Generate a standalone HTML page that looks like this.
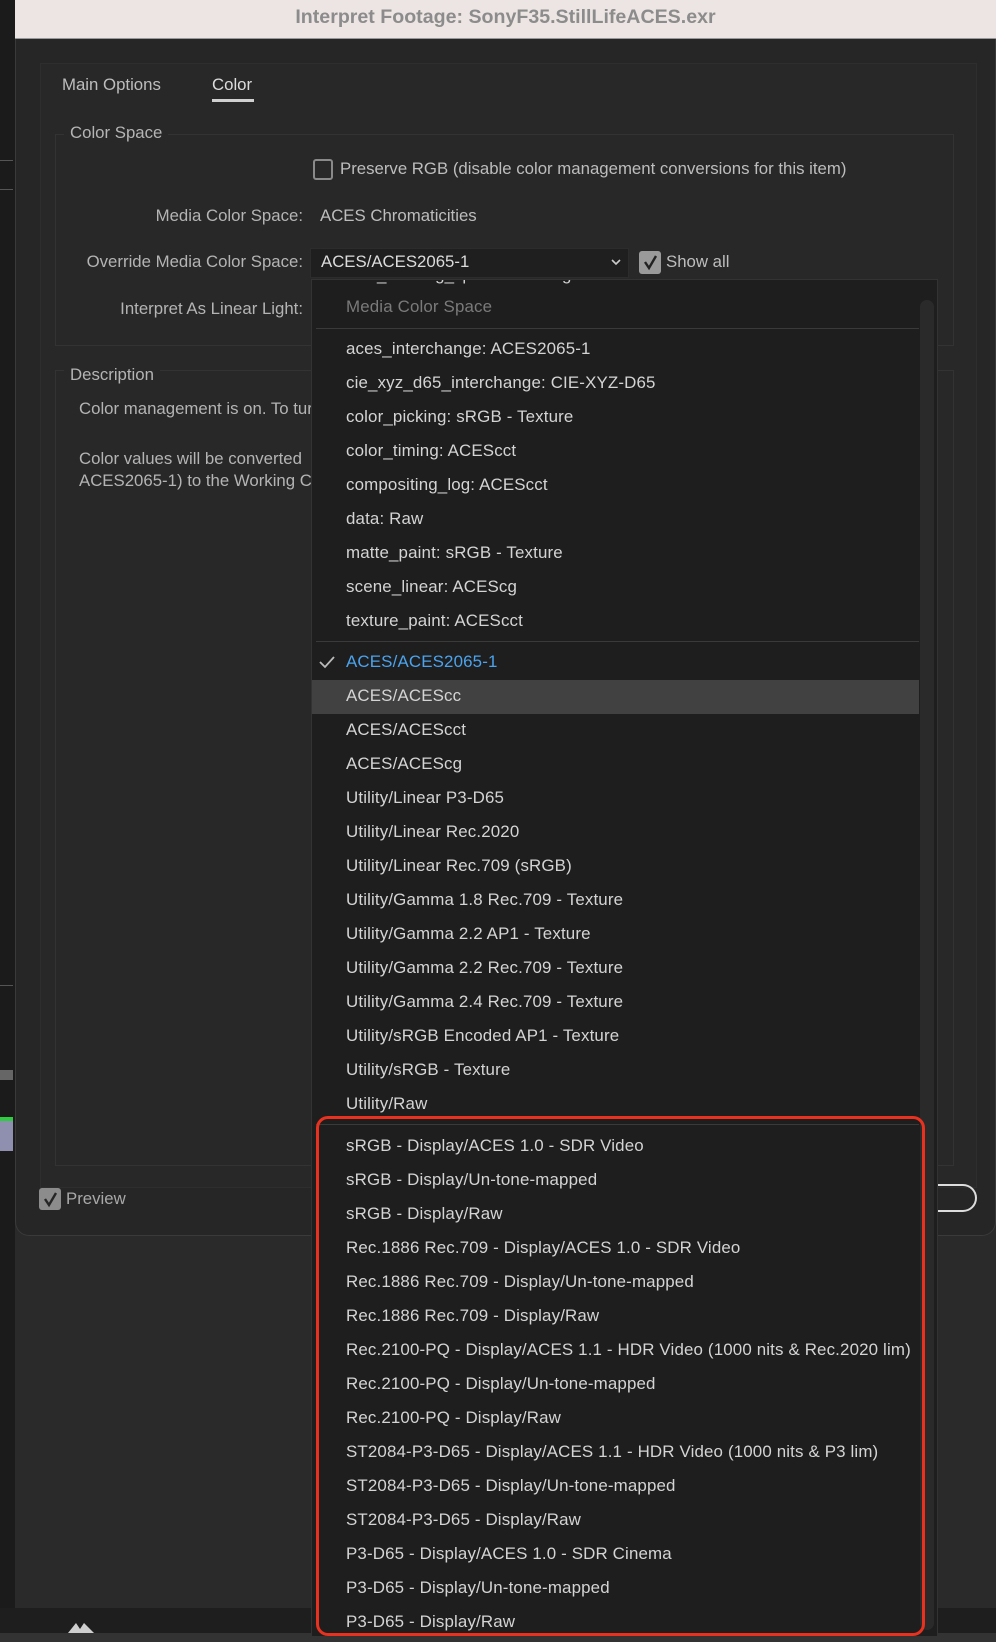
<!DOCTYPE html>
<html><head><meta charset="utf-8"><style>
*{margin:0;padding:0;box-sizing:border-box}
body{width:996px;height:1642px;background:#2a2a2a;position:relative;overflow:hidden;font-family:"Liberation Sans",sans-serif;font-size:16.8px;color:#c8c8c8}
.a{position:absolute;white-space:nowrap}
.it{position:absolute;left:346px;height:34px;line-height:34px;color:#d4d4d4;white-space:nowrap;font-size:16.9px;letter-spacing:0.15px}
.lbl{position:absolute;text-align:right;width:300px;color:#b4b4b4;white-space:nowrap;line-height:20px}
</style></head><body>
<div class="a" style="left:0;top:0;width:15px;height:1642px;background:#1b1b1b"></div>
<div class="a" style="left:0;top:160px;width:13px;height:30px;border-top:1px solid #555;border-bottom:1px solid #555"></div>
<div class="a" style="left:0;top:985px;width:13px;height:1px;background:#555"></div>
<div class="a" style="left:0;top:1070px;width:13px;height:10px;background:#666"></div>
<div class="a" style="left:0;top:1117px;width:13px;height:4px;background:#2ecc40"></div>
<div class="a" style="left:0;top:1121px;width:13px;height:30px;background:#8f8fb0"></div>
<div class="a" style="left:0;top:1608px;width:996px;height:34px;background:#1e1e1e"></div>
<div class="a" style="left:0;top:1633px;width:996px;height:9px;background:#333"></div>
<svg class="a" style="left:66px;top:1620px" width="30" height="14"><path d="M2 13 L10 3 L14 9 L18 3 L28 13 Z" fill="#cfcfcf"/></svg>
<div class="a" style="left:15px;top:0;width:981px;height:1236px;background:#262626;border-radius:0 0 14px 14px;border:1px solid #3a3a3a;border-top:none"></div>
<div class="a" style="left:15px;top:0;width:981px;height:39px;background:#ece5e3;border-bottom:1px solid #999"></div>
<div class="a" style="left:15px;top:0;width:981px;height:39px;line-height:34px;text-align:center;color:#8c8c8c;font-weight:bold;font-size:19.6px">Interpret Footage: SonyF35.StillLifeACES.exr</div>
<div class="a" style="left:40px;top:63px;width:937px;height:1125px;border:1px solid #2e2e2e;background:#282828"></div>
<div class="a" style="left:62px;top:74px;color:#bdbdbd;line-height:22px">Main Options</div>
<div class="a" style="left:212px;top:74px;color:#dcdcdc;line-height:22px">Color</div>
<div class="a" style="left:212px;top:99px;width:42px;height:3px;background:#d0d0d0"></div>
<div class="a" style="left:55px;top:134px;width:899px;height:212px;border:1px solid #333"></div>
<div class="a" style="left:64px;top:123px;padding:0 6px;background:#282828;color:#b4b4b4;line-height:20px">Color Space</div>
<div class="a" style="left:313px;top:159px;width:20px;height:21px;border:2px solid #8a8a8a;border-radius:3px"></div>
<div class="a" style="left:340px;top:159px;color:#bdbdbd;line-height:20px">Preserve RGB (disable color management conversions for this item)</div>
<div class="lbl" style="left:3px;top:206px">Media Color Space:</div>
<div class="a" style="left:320px;top:206px;color:#bdbdbd;line-height:20px">ACES Chromaticities</div>
<div class="lbl" style="left:3px;top:252px">Override Media Color Space:</div>
<div class="a" style="left:310px;top:248px;width:319px;height:30px;background:#1f1f1f;border:1px solid #2c2c2c"></div>
<div class="a" style="left:321px;top:252px;color:#dcdcdc;line-height:20px">ACES/ACES2065-1</div>
<svg class="a" style="left:610px;top:257px" width="12" height="10"><path d="M2 3 L6 7 L10 3" stroke="#ccc" stroke-width="1.6" fill="none"/></svg>
<div class="a" style="left:639px;top:251px;width:22px;height:23px;background:#9a9a9a;border-radius:3px"></div>
<svg class="a" style="left:641px;top:253px" width="18" height="19"><path d="M4 9 L8 15 L15 3" stroke="#222" stroke-width="2.4" fill="none"/></svg>
<div class="a" style="left:666px;top:252px;color:#bdbdbd;line-height:20px">Show all</div>
<div class="lbl" style="left:3px;top:299px">Interpret As Linear Light:</div>
<div class="a" style="left:55px;top:370px;width:899px;height:796px;border:1px solid #333"></div>
<div class="a" style="left:64px;top:365px;padding:0 6px;background:#282828;color:#b4b4b4;line-height:20px">Description</div>
<div class="a" style="left:79px;top:399px;color:#b4b4b4;line-height:20px">Color management is on. To turn</div>
<div class="a" style="left:79px;top:448px;color:#b4b4b4;line-height:22px">Color values will be converted<br>ACES2065-1) to the Working C</div>
<div class="a" style="left:39px;top:1188px;width:22px;height:22px;background:#8c8c8c;border-radius:3px"></div>
<svg class="a" style="left:41px;top:1190px" width="18" height="18"><path d="M4 9 L8 15 L15 3" stroke="#262626" stroke-width="2.4" fill="none"/></svg>
<div class="a" style="left:66px;top:1188px;color:#a8a8a8;line-height:22px">Preview</div>
<div class="a" style="left:900px;top:1184px;width:77px;height:28px;border:2px solid #ddd;border-left:none;border-radius:0 14px 14px 0"></div>
<div class="a" style="left:311px;top:279px;width:627px;height:1358px;background:#1e1e1e;border:1px solid #333"></div>
<div class="a" style="left:920px;top:300px;width:14px;height:1330px;background:#2a2a2a;border-radius:7px"></div>
<div class="a" style="left:346px;top:280px;height:5px;width:300px;overflow:hidden"><div style="position:absolute;top:-14px;color:#d0d0d0;line-height:18px;font-size:16.9px">ocio_working_space: ACEScg</div></div>
<div class="it" style="top:290px;color:#7a7a7a">Media Color Space</div>
<div class="a" style="left:316px;top:328px;width:603px;height:1px;background:#3a3a3a"></div>
<div class="it" style="top:332px">aces_interchange: ACES2065-1</div>
<div class="it" style="top:366px">cie_xyz_d65_interchange: CIE-XYZ-D65</div>
<div class="it" style="top:400px">color_picking: sRGB - Texture</div>
<div class="it" style="top:434px">color_timing: ACEScct</div>
<div class="it" style="top:468px">compositing_log: ACEScct</div>
<div class="it" style="top:502px">data: Raw</div>
<div class="it" style="top:536px">matte_paint: sRGB - Texture</div>
<div class="it" style="top:570px">scene_linear: ACEScg</div>
<div class="it" style="top:604px">texture_paint: ACEScct</div>
<div class="a" style="left:316px;top:641px;width:603px;height:1px;background:#3a3a3a"></div>
<svg class="a" style="left:318px;top:655px" width="18" height="14"><path d="M2 7 L7 12 L16 2" stroke="#bbb" stroke-width="1.8" fill="none"/></svg>
<div class="it" style="top:645px;color:#4ba3ee">ACES/ACES2065-1</div>
<div class="a" style="left:312px;top:680px;width:607px;height:34px;background:#414141"></div>
<div class="it" style="top:679px">ACES/ACEScc</div>
<div class="it" style="top:713px">ACES/ACEScct</div>
<div class="it" style="top:747px">ACES/ACEScg</div>
<div class="it" style="top:781px">Utility/Linear P3-D65</div>
<div class="it" style="top:815px">Utility/Linear Rec.2020</div>
<div class="it" style="top:849px">Utility/Linear Rec.709 (sRGB)</div>
<div class="it" style="top:883px">Utility/Gamma 1.8 Rec.709 - Texture</div>
<div class="it" style="top:917px">Utility/Gamma 2.2 AP1 - Texture</div>
<div class="it" style="top:951px">Utility/Gamma 2.2 Rec.709 - Texture</div>
<div class="it" style="top:985px">Utility/Gamma 2.4 Rec.709 - Texture</div>
<div class="it" style="top:1019px">Utility/sRGB Encoded AP1 - Texture</div>
<div class="it" style="top:1053px">Utility/sRGB - Texture</div>
<div class="it" style="top:1087px">Utility/Raw</div>
<div class="a" style="left:316px;top:1124px;width:603px;height:1px;background:#3a3a3a"></div>
<div class="it" style="top:1129px">sRGB - Display/ACES 1.0 - SDR Video</div>
<div class="it" style="top:1163px">sRGB - Display/Un-tone-mapped</div>
<div class="it" style="top:1197px">sRGB - Display/Raw</div>
<div class="it" style="top:1231px">Rec.1886 Rec.709 - Display/ACES 1.0 - SDR Video</div>
<div class="it" style="top:1265px">Rec.1886 Rec.709 - Display/Un-tone-mapped</div>
<div class="it" style="top:1299px">Rec.1886 Rec.709 - Display/Raw</div>
<div class="it" style="top:1333px">Rec.2100-PQ - Display/ACES 1.1 - HDR Video (1000 nits &amp; Rec.2020 lim)</div>
<div class="it" style="top:1367px">Rec.2100-PQ - Display/Un-tone-mapped</div>
<div class="it" style="top:1401px">Rec.2100-PQ - Display/Raw</div>
<div class="it" style="top:1435px">ST2084-P3-D65 - Display/ACES 1.1 - HDR Video (1000 nits &amp; P3 lim)</div>
<div class="it" style="top:1469px">ST2084-P3-D65 - Display/Un-tone-mapped</div>
<div class="it" style="top:1503px">ST2084-P3-D65 - Display/Raw</div>
<div class="it" style="top:1537px">P3-D65 - Display/ACES 1.0 - SDR Cinema</div>
<div class="it" style="top:1571px">P3-D65 - Display/Un-tone-mapped</div>
<div class="it" style="top:1605px">P3-D65 - Display/Raw</div>
<div class="a" style="left:316px;top:1116px;width:609px;height:520px;border:3px solid #e8321f;border-radius:12px"></div>
</body></html>
